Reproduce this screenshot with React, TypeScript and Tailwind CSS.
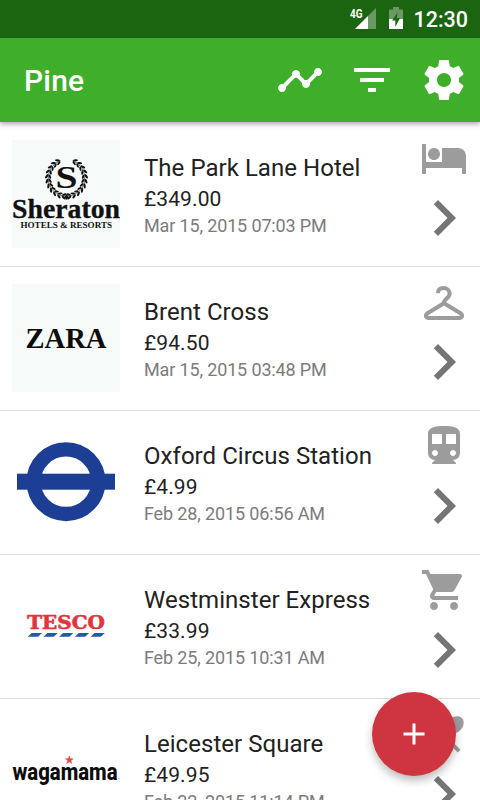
import type { ReactNode } from 'react';

const ICONS = {
  timeline:
    'M23 8c0 1.1-.9 2-2 2-.18 0-.35-.02-.51-.07l-3.56 3.55c.05.16.07.34.07.52 0 1.1-.9 2-2 2s-2-.9-2-2c0-.18.02-.36.07-.52l-2.55-2.55c-.16.05-.34.07-.52.07s-.36-.02-.52-.07l-4.55 4.56c.05.16.07.33.07.51 0 1.1-.9 2-2 2s-2-.9-2-2 .9-2 2-2c.18 0 .35.02.51.07l4.56-4.55C8.02 9.36 8 9.18 8 9c0-1.1.9-2 2-2s2 .9 2 2c0 .18-.02.36-.07.52l2.55 2.55c.16-.05.34-.07.52-.07s.36.02.52.07l3.55-3.56C19.02 8.35 19 8.18 19 8c0-1.1.9-2 2-2s2 .9 2 2z',
  filter: 'M10 18h4v-2h-4v2zM3 6v2h18V6H3zm3 7h12v-2H6v2z',
  settings:
    'M19.43 12.98c.04-.32.07-.64.07-.98s-.03-.66-.07-.98l2.11-1.65c.19-.15.24-.42.12-.64l-2-3.46c-.12-.22-.39-.3-.61-.22l-2.49 1c-.52-.4-1.08-.73-1.69-.98l-.38-2.65C14.46 2.18 14.25 2 14 2h-4c-.25 0-.46.18-.49.42l-.38 2.65c-.61.25-1.17.59-1.69.98l-2.49-1c-.23-.09-.49 0-.61.22l-2 3.46c-.13.22-.07.49.12.64l2.11 1.65c-.04.32-.07.65-.07.98s.03.66.07.98l-2.11 1.65c-.19.15-.24.42-.12.64l2 3.46c.12.22.39.3.61.22l2.49-1c.52.4 1.08.73 1.69.98l.38 2.65c.03.24.24.42.49.42h4c.25 0 .46-.18.49-.42l.38-2.65c.61-.25 1.17-.59 1.69-.98l2.49 1c.23.09.49 0 .61-.22l2-3.46c.12-.22.07-.49-.12-.64l-2.11-1.65zM12 15.5c-1.93 0-3.5-1.57-3.5-3.5s1.57-3.5 3.5-3.5 3.5 1.57 3.5 3.5-1.57 3.5-3.5 3.5z',
  hotel:
    'M7 13c1.66 0 3-1.34 3-3S8.66 7 7 7s-3 1.34-3 3 1.34 3 3 3zm12-6h-8v7H3V5H1v15h2v-3h18v3h2v-9c0-2.21-1.79-4-4-4z',
  train:
    'M12 2c-4.42 0-8 .5-8 4v9.5C4 17.43 5.57 19 7.5 19L6 20.5v.5h12v-.5L16.5 19c1.93 0 3.5-1.57 3.5-3.5V6c0-3.5-3.58-4-8-4zM7.5 17c-.83 0-1.5-.67-1.5-1.5S6.67 14 7.5 14s1.5.67 1.5 1.5S8.33 17 7.5 17zm3.5-6H6V6h5v5zm5.5 6c-.83 0-1.5-.67-1.5-1.5s.67-1.5 1.5-1.5 1.5.67 1.5 1.5-.67 1.5-1.5 1.5zm1.5-6h-5V6h5v5z',
  cart: 'M7 18c-1.1 0-1.99.9-1.99 2S5.9 22 7 22s2-.9 2-2-.9-2-2-2zM1 2v2h2l3.6 7.59-1.35 2.45c-.16.28-.25.61-.25.96 0 1.1.9 2 2 2h12v-2H7.42c-.14 0-.25-.11-.25-.25l.03-.12.9-1.63h7.45c.75 0 1.41-.41 1.75-1.03l3.58-6.49c.08-.14.12-.31.12-.48 0-.55-.45-1-1-1H5.21l-.94-2H1zm16 16c-1.1 0-1.99.9-1.99 2s.89 2 1.99 2 2-.9 2-2-.9-2-2-2z',
  dining:
    'M8.1 13.34l2.83-2.83L3.91 3.5c-1.56 1.56-1.56 4.09 0 5.66l4.19 4.18zm6.78-1.81c1.53.71 3.68.21 5.27-1.38 1.91-1.91 2.28-4.65.81-6.12-1.46-1.46-4.2-1.1-6.12.81-1.59 1.59-2.09 3.74-1.38 5.27L3.7 19.87l1.41 1.41L12 14.41l6.88 6.88 1.41-1.41L13.41 13l1.47-1.47z',
  chevron: 'M10 6L8.59 7.41 13.17 12l-4.58 4.59L10 18l6-6z',
  add: 'M19 13h-6v6h-2v-6H5v-2h6V5h2v6h6v2z',
};

function Icon({ d, className }: { d: string; className: string }) {
  return (
    <svg viewBox="0 0 24 24" className={className} fill="currentColor">
      <path d={d} />
    </svg>
  );
}

function Hanger() {
  return (
    <svg
      viewBox="0 0 48 48"
      className="size-12 text-[#9c9c9c]"
      fill="none"
      stroke="currentColor"
      strokeWidth="4"
      strokeLinejoin="round"
    >
      <path d="M18 15.2C18 11.6 20.4 10 23.6 10C27 10 29.6 12.4 29.6 15.6C29.6 20.8 24 19.8 24 25" />
      <path d="M24 25.2L7.5 35.2C4.8 37.2 5.8 40 8.5 40H39.5C42.2 40 43.2 37.2 40.5 35.2Z" />
    </svg>
  );
}

/* Logos, all on a 108px tile */

const leaves = Array.from({ length: 11 }, (_, i) => 24 + i * 14.5);

function SheratonLogo() {
  return (
    <svg viewBox="0 0 108 108" className="size-full bg-[#f6fbf9]">
      {[1, -1].map((side) => (
        <g key={side} transform={`translate(54.5 38) scale(${side} 1)`}>
          <path d="M6 -17.3A18.3 18.3 0 0 1 0 18.3" fill="none" stroke="#111" strokeWidth="0.6" />
          {leaves.map((angle) => (
            <g key={angle} transform={`rotate(${angle})`} fill="#111">
              <ellipse cx="1" cy="-19.8" rx="2.5" ry="1.1" transform="rotate(-28 1 -19.8)" />
              <ellipse cx="1" cy="-16.6" rx="2.3" ry="1" transform="rotate(28 1 -16.6)" />
            </g>
          ))}
        </g>
      ))}
      <path d="M54.5 54l2 3-2 3-2-3z" fill="#111" />
      <text
        x="43.5"
        y="47.5"
        fontSize="32"
        fontWeight="700"
        textLength="22"
        lengthAdjust="spacingAndGlyphs"
        className="font-['Liberation_Serif',serif]"
        fill="#111"
      >
        S
      </text>
      <text
        x="0"
        y="77.8"
        fontSize="26.5"
        fontWeight="700"
        textLength="108"
        lengthAdjust="spacingAndGlyphs"
        className="font-['Liberation_Serif',serif]"
        fill="#111"
        stroke="#111"
        strokeWidth="0.3"
      >
        Sheraton
      </text>
      <text
        x="8.5"
        y="87.8"
        fontSize="8.5"
        fontWeight="700"
        textLength="91.5"
        lengthAdjust="spacingAndGlyphs"
        className="font-['Liberation_Serif',serif]"
        fill="#111"
      >
        HOTELS &amp; RESORTS
      </text>
    </svg>
  );
}

function ZaraLogo() {
  return (
    <svg viewBox="0 0 108 108" className="size-full bg-[#f6fbf9]">
      <text
        x="13.5"
        y="63.8"
        fontSize="29.5"
        fontWeight="700"
        textLength="81"
        lengthAdjust="spacingAndGlyphs"
        className="font-['Liberation_Serif',serif]"
        fill="#0c0c0c"
      >
        ZARA
      </text>
    </svg>
  );
}

function RoundelLogo() {
  return (
    <svg viewBox="0 0 108 108" className="size-full">
      <circle cx="54" cy="53.7" r="32.3" fill="none" stroke="#1c3f95" strokeWidth="14.3" />
      <rect x="5" y="45.7" width="98" height="16" fill="#1c3f95" />
    </svg>
  );
}

function TescoLogo() {
  return (
    <svg viewBox="0 0 108 108" className="size-full">
      <text
        x="15.3"
        y="57.4"
        fontSize="18"
        fontWeight="700"
        textLength="77.5"
        lengthAdjust="spacingAndGlyphs"
        className="font-['DejaVu_Serif',serif]"
        fill="#e2343c"
        stroke="#e2343c"
        strokeWidth="0.6"
      >
        TESCO
      </text>
      {[15.7, 31.4, 47.1, 62.8, 78.5].map((x) => (
        <path key={x} d={`M${x} 64.8l4-3.8h10.3l-4 3.8z`} fill="#1f5aa6" />
      ))}
    </svg>
  );
}

function WagamamaLogo() {
  return (
    <svg viewBox="0 0 108 108" className="size-full">
      <text
        x="0.5"
        y="63.5"
        fontSize="23.5"
        fontWeight="800"
        textLength="105"
        lengthAdjust="spacingAndGlyphs"
        className="font-[Roboto,sans-serif]"
        fill="#0c0c0c"
      >
        wagamama
      </text>
      <path
        d="M57.3 40l1 2.7 2.9.1-2.3 1.8.9 2.8-2.5-1.6-2.5 1.6.9-2.8-2.3-1.8 2.900-.1z"
        fill="#e4483f"
        stroke="#e4483f"
        strokeWidth="0.5"
      />
      <circle cx="107" cy="62.5" r="0.6" fill="#888" />
    </svg>
  );
}

type Transaction = {
  name: string;
  amount: string;
  date: string;
  logo: ReactNode;
  category: ReactNode;
};

const categoryClass = 'size-12 text-[#9c9c9c]';

const transactions: Transaction[] = [
  {
    name: 'The Park Lane Hotel',
    amount: '£349.00',
    date: 'Mar 15, 2015 07:03 PM',
    logo: <SheratonLogo />,
    category: <Icon d={ICONS.hotel} className={categoryClass} />,
  },
  {
    name: 'Brent Cross',
    amount: '£94.50',
    date: 'Mar 15, 2015 03:48 PM',
    logo: <ZaraLogo />,
    category: <Hanger />,
  },
  {
    name: 'Oxford Circus Station',
    amount: '£4.99',
    date: 'Feb 28, 2015 06:56 AM',
    logo: <RoundelLogo />,
    category: <Icon d={ICONS.train} className={categoryClass} />,
  },
  {
    name: 'Westminster Express',
    amount: '£33.99',
    date: 'Feb 25, 2015 10:31 AM',
    logo: <TescoLogo />,
    category: <Icon d={ICONS.cart} className={categoryClass} />,
  },
  {
    name: 'Leicester Square',
    amount: '£49.95',
    date: 'Feb 22, 2015 11:14 PM',
    logo: <WagamamaLogo />,
    category: <Icon d={ICONS.dining} className={categoryClass} />,
  },
];

function StatusBar() {
  return (
    <div className="z-20 flex h-[38px] shrink-0 items-center justify-end bg-[#1b6410] pr-3 text-white">
      <svg viewBox="0 0 28 24" className="mr-3 h-6 w-7">
        <path d="M28 1v21H7z" fill="#fff" fillOpacity="0.35" />
        <path d="M20 9v13H7z" fill="#fff" />
        <text
          x="2"
          y="11"
          fontSize="12.5"
          fontWeight="700"
          textLength="12.5"
          lengthAdjust="spacingAndGlyphs"
          fill="#fff"
        >
          4G
        </text>
      </svg>
      <svg viewBox="0 0 16 24" className="mr-[9px] h-6 w-4">
        <path d="M1 2.5h4V0h6v2.5h4V12H1z" fill="#fff" fillOpacity="0.35" />
        <path d="M1 12h14v10H1z" fill="#fff" />
        <path d="M9.5 5.5L4 13.5h3.3V20L12 11H8.7z" fill="#1b6410" />
      </svg>
      <span className="pt-0.5 text-[21.5px] leading-none font-medium">12:30</span>
    </div>
  );
}

function TransactionRow({ item }: { item: Transaction }) {
  return (
    <li className="flex h-36 shrink-0 border-t border-[#dadada] pl-3 first:border-transparent">
      <div className="mt-[17px] size-[108px] shrink-0">{item.logo}</div>
      <div className="ml-6 flex-1 pt-[31px] whitespace-nowrap">
        <h2 className="text-2xl leading-7 tracking-[0.04px] text-[#212121]">{item.name}</h2>
        <p className="mt-[5px] text-[21px] leading-6 tracking-[0.1px] text-[#212121]">{item.amount}</p>
        <p className="mt-1 text-lg leading-[21px] tracking-[-0.14px] text-[#7b7b7b]">{item.date}</p>
      </div>
      <div className="flex w-[72px] shrink-0 flex-col items-center pt-[11px]">
        {item.category}
        <Icon d={ICONS.chevron} className="size-[72px] shrink-0 text-[#757575]" />
      </div>
    </li>
  );
}

export default function App() {
  return (
    <div className="relative flex h-[800px] w-[480px] flex-col overflow-hidden bg-white font-[Roboto,sans-serif]">
      <StatusBar />

      {/* Toolbar */}
      <header className="z-10 flex h-[84px] shrink-0 items-center bg-[#3eae2b] pr-3 pl-6 text-white shadow-[0_2px_5px_rgba(0,0,0,0.35)]">
        <h1 className="flex-1 pt-0.5 text-[30px] leading-none font-medium tracking-[0.2px]">Pine</h1>
        <div className="flex gap-6">
          <Icon d={ICONS.timeline} className="size-12" />
          <Icon d={ICONS.filter} className="size-12" />
          <Icon d={ICONS.settings} className="size-12" />
        </div>
      </header>

      {/* Transactions */}
      <ul className="flex min-h-0 flex-1 flex-col overflow-hidden">
        {transactions.map((item) => (
          <TransactionRow key={item.name} item={item} />
        ))}
      </ul>

      {/* Add button */}
      <button className="absolute right-6 bottom-6 flex size-[84px] items-center justify-center rounded-full bg-[#cf3441] text-white shadow-[0_5px_9px_rgba(0,0,0,0.25)]">
        <Icon d={ICONS.add} className="size-9" />
      </button>
    </div>
  );
}
